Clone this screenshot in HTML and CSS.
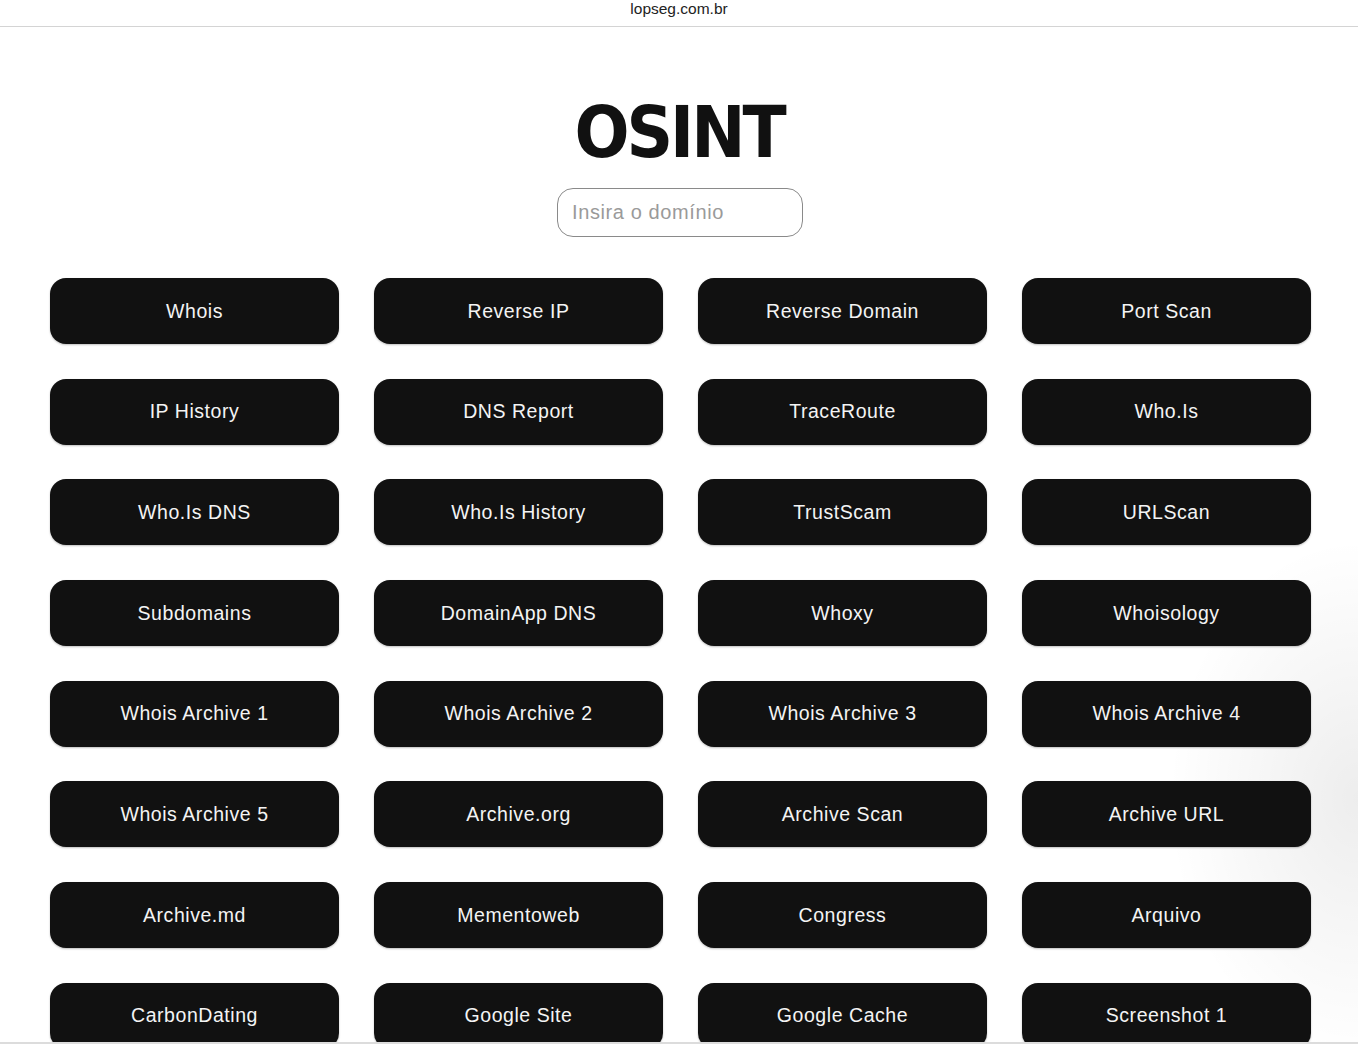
FILE: index.html
```html
<!DOCTYPE html>
<html lang="pt-BR">
<head>
<meta charset="utf-8">
<title>OSINT</title>
<link rel="stylesheet" href="styles.css">
</head>
<body>
<div class="topbar">lopseg.com.br</div>
<main class="page">
  <h1 class="title">OSINT</h1>
  <div class="search"><input class="domain" type="text" placeholder="Insira o domínio"></div>
  <div class="grid">
    <a class="tool">Whois</a>
    <a class="tool">Reverse IP</a>
    <a class="tool">Reverse Domain</a>
    <a class="tool">Port Scan</a>
    <a class="tool">IP History</a>
    <a class="tool">DNS Report</a>
    <a class="tool">TraceRoute</a>
    <a class="tool">Who.Is</a>
    <a class="tool">Who.Is DNS</a>
    <a class="tool">Who.Is History</a>
    <a class="tool">TrustScam</a>
    <a class="tool">URLScan</a>
    <a class="tool">Subdomains</a>
    <a class="tool">DomainApp DNS</a>
    <a class="tool">Whoxy</a>
    <a class="tool">Whoisology</a>
    <a class="tool">Whois Archive 1</a>
    <a class="tool">Whois Archive 2</a>
    <a class="tool">Whois Archive 3</a>
    <a class="tool">Whois Archive 4</a>
    <a class="tool">Whois Archive 5</a>
    <a class="tool">Archive.org</a>
    <a class="tool">Archive Scan</a>
    <a class="tool">Archive URL</a>
    <a class="tool">Archive.md</a>
    <a class="tool">Mementoweb</a>
    <a class="tool">Congress</a>
    <a class="tool">Arquivo</a>
    <a class="tool">CarbonDating</a>
    <a class="tool">Google Site</a>
    <a class="tool">Google Cache</a>
    <a class="tool">Screenshot 1</a>
  </div>
</main>
</body>
</html>
```
FILE: styles.css
```css
html, body {
  margin: 0;
  padding: 0;
  background: #ffffff;
  height: 100%;
  overflow: hidden;
}
.topbar {
  height: 26px;
  border-bottom: 1px solid #d4d4d4;
  font-family: "Liberation Sans", Arial, sans-serif;
  font-size: 15.5px;
  color: #222;
  text-align: center;
  line-height: 17px;
  background: #fff;
}
.page {
  height: 1017px;
  box-sizing: border-box;
  overflow: hidden;
  border-bottom: 2px solid #dcdcdc;
  background:
    radial-gradient(ellipse 190px 260px at 100% 76%, rgba(0,0,0,0.07), rgba(0,0,0,0) 100%),
    #fff;
  display: flex;
  flex-direction: column;
  align-items: center;
  padding-top: 60px;
}
.title {
  margin: 0 0 0 0;
  font-family: "DejaVu Sans Condensed", "Liberation Sans", Arial, sans-serif;
  font-weight: 700;
  font-size: 72px;
  line-height: 90px;
  letter-spacing: -3px;
  color: #111;
}
.search {
  margin-top: 11px;
  margin-left: 2px;
}
.domain {
  width: 246px;
  height: 49px;
  box-sizing: border-box;
  border: 1px solid #8a8a8a;
  border-radius: 16px;
  padding: 0 14px;
  font-family: "Liberation Sans", Arial, sans-serif;
  font-size: 20px;
  letter-spacing: 0.6px;
  color: #222;
  outline: none;
  background: transparent;
}
.domain::placeholder {
  color: #9a9a9a;
}
.grid {
  margin-top: 41px;
  margin-left: 3px;
  display: grid;
  grid-template-columns: repeat(4, 289px);
  grid-auto-rows: 66px;
  column-gap: 35px;
  row-gap: 34.7px;
}
.tool {
  display: flex;
  align-items: center;
  justify-content: center;
  background: #111111;
  color: #f4f4f4;
  border-radius: 16px;
  box-shadow: 0 1px 2px rgba(0,0,0,0.25);
  font-family: "Liberation Sans", Arial, sans-serif;
  font-size: 19.5px;
  letter-spacing: 0.55px;
  cursor: pointer;
}
```
